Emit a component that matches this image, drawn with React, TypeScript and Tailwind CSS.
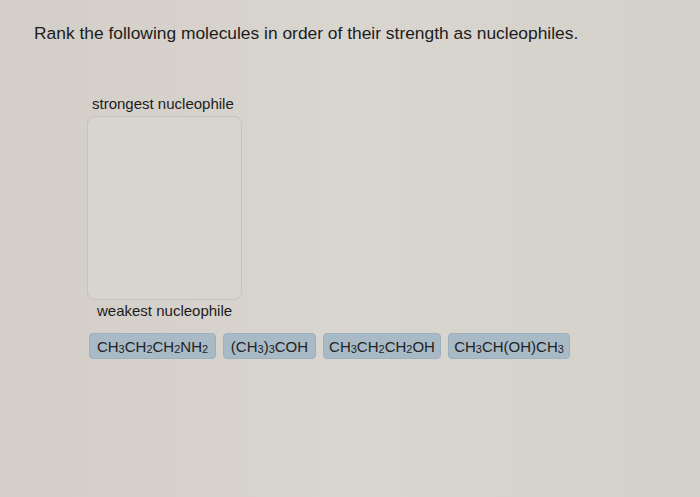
import React from "react";

const Sub: React.FC<{ children: React.ReactNode }> = ({ children }) => (
  <sub className="text-[11px] align-[-3px]">{children}</sub>
);

const Chip: React.FC<{ children: React.ReactNode; w: string }> = ({ children, w }) => (
  <div
    className={`h-[26px] ${w} flex items-center justify-center rounded-[4px] border border-[#9cb0bf] bg-[#a9bac7] text-[15px] text-[#222] leading-none`}
  >
    {children}
  </div>
);

const App: React.FC = () => {
  return (
    <div
      className="w-[700px] h-[497px] overflow-hidden bg-gradient-to-r from-[#d3cec7] via-[#d9d5cf] to-[#d4d0ca] text-[#1c1c1c]"
      style={{ fontFamily: '"Liberation Sans", Arial, sans-serif' }}
    >
      <h1 className="pt-[23px] pl-[34px] text-[17.4px] leading-[20px]">
        Rank the following molecules in order of their strength as nucleophiles.
      </h1>

      <div className="mt-[52px] ml-[87px] w-[155px]">
        <p className="pl-[5px] text-[15px] leading-[18px]">strongest nucleophile</p>
        <div className="mt-[3px] h-[184px] rounded-[8px] border border-[#c6c2bc] bg-[#d8d4ce]" />
        <p className="pl-[10px] mt-[2px] text-[15px] leading-[18px]">weakest nucleophile</p>
      </div>

      <div className="mt-[13px] ml-[89px] flex gap-[7px]">
        <Chip w="w-[127px]">
          CH<Sub>3</Sub>CH<Sub>2</Sub>CH<Sub>2</Sub>NH<Sub>2</Sub>
        </Chip>
        <Chip w="w-[93px]">
          (CH<Sub>3</Sub>)<Sub>3</Sub>COH
        </Chip>
        <Chip w="w-[118px]">
          CH<Sub>3</Sub>CH<Sub>2</Sub>CH<Sub>2</Sub>OH
        </Chip>
        <Chip w="w-[122px]">
          CH<Sub>3</Sub>CH(OH)CH<Sub>3</Sub>
        </Chip>
      </div>
    </div>
  );
};

export default App;
